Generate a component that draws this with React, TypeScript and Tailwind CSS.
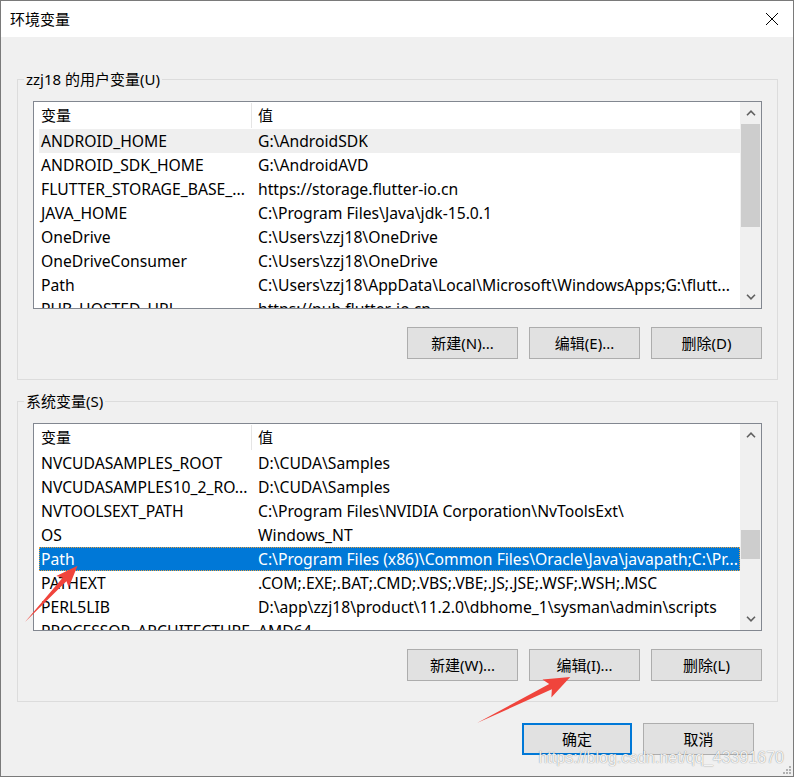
import React from "react";

type Row = [string, string];

const userRows: Row[] = [
  ["ANDROID_HOME", "G:\\AndroidSDK"],
  ["ANDROID_SDK_HOME", "G:\\AndroidAVD"],
  ["FLUTTER_STORAGE_BASE_...", "https://storage.flutter-io.cn"],
  ["JAVA_HOME", "C:\\Program Files\\Java\\jdk-15.0.1"],
  ["OneDrive", "C:\\Users\\zzj18\\OneDrive"],
  ["OneDriveConsumer", "C:\\Users\\zzj18\\OneDrive"],
  ["Path", "C:\\Users\\zzj18\\AppData\\Local\\Microsoft\\WindowsApps;G:\\flutt..."],
  ["PUB_HOSTED_URL", "https://pub.flutter-io.cn"],
];

const sysRows: Row[] = [
  ["NVCUDASAMPLES_ROOT", "D:\\CUDA\\Samples"],
  ["NVCUDASAMPLES10_2_RO...", "D:\\CUDA\\Samples"],
  ["NVTOOLSEXT_PATH", "C:\\Program Files\\NVIDIA Corporation\\NvToolsExt\\"],
  ["OS", "Windows_NT"],
  ["Path", "C:\\Program Files (x86)\\Common Files\\Oracle\\Java\\javapath;C:\\Pr..."],
  ["PATHEXT", ".COM;.EXE;.BAT;.CMD;.VBS;.VBE;.JS;.JSE;.WSF;.WSH;.MSC"],
  ["PERL5LIB", "D:\\app\\zzj18\\product\\11.2.0\\dbhome_1\\sysman\\admin\\scripts"],
  ["PROCESSOR_ARCHITECTURE", "AMD64"],
];

function Chevron({ up }: { up?: boolean }) {
  return (
    <svg width="10" height="6" viewBox="0 0 10 6" className="block">
      <polyline
        points={up ? "1,5.2 5,1.2 9,5.2" : "1,0.8 5,4.8 9,0.8"}
        fill="none"
        stroke="#606060"
        strokeWidth="1.6"
      />
    </svg>
  );
}

function VarList({
  rows,
  hoverIndex,
  selectedIndex,
  thumbOffset,
  thumbHeight,
}: {
  rows: Row[];
  hoverIndex?: number;
  selectedIndex?: number;
  thumbOffset: number;
  thumbHeight: number;
}) {
  return (
    <div className="h-[208px] w-[729px] border border-[#828790] bg-white flex">
      <div className="flex-1 pl-[5px] overflow-hidden flex flex-col">
        <div className="h-[27px] shrink-0 flex items-center">
          <div className="w-[212px] pl-[2px]">变量</div>
          <div className="w-px h-[25px] bg-[#e5e5e5]" />
          <div className="pl-[6px]">值</div>
        </div>
        {rows.map(([k, v], i) => {
          const sel = i === selectedIndex;
          const hov = i === hoverIndex;
          return (
            <div
              key={k + i}
              className={
                "h-[24px] shrink-0 flex items-center pt-px whitespace-nowrap text-[15.7px] " +
                (sel
                  ? "bg-[#0078d7] text-white outline outline-1 outline-dotted outline-[#e8a040] -outline-offset-1"
                  : hov
                  ? "bg-[#efefef]"
                  : "")
              }
            >
              <div className="w-[213px] shrink-0 pl-[2px] overflow-hidden">{k}</div>
              <div className="pl-[6px] overflow-hidden">{v}</div>
            </div>
          );
        })}
      </div>
      <div className="w-[21px] shrink-0 bg-[#f0f0f0] flex flex-col">
        <div className="h-[22px] shrink-0 flex items-center justify-center">
          <Chevron up />
        </div>
        <div className="shrink-0" style={{ height: thumbOffset }} />
        <div className="shrink-0 mx-px bg-[#cdcdcd]" style={{ height: thumbHeight }} />
        <div className="flex-1" />
        <div className="h-[22px] shrink-0 flex items-center justify-center">
          <Chevron />
        </div>
      </div>
    </div>
  );
}

function Btn({ children, primary }: { children: React.ReactNode; primary?: boolean }) {
  return (
    <div
      className={
        "h-[32px] flex items-center justify-center bg-[#e1e1e1] " +
        (primary ? "w-[110px] border-2 border-[#0078d7]" : "w-[111px] border border-[#adadad]")
      }
    >
      {children}
    </div>
  );
}

function Group({
  title,
  children,
  className,
}: {
  title: string;
  children: React.ReactNode;
  className?: string;
}) {
  return (
    <fieldset className={"border border-[#dcdcdc] " + (className || "")}>
      <legend className="ml-[6px] px-[2px] leading-[20px]">{title}</legend>
      <div className="px-[15px] pt-[12px] pb-[20px]">{children}</div>
    </fieldset>
  );
}

export default function App() {
  return (
    <div className="relative w-[794px] h-[777px] border border-[#7a7a7a] bg-[#f0f0f0] text-[15px] text-black font-['Noto_Sans','Noto_Sans_CJK_SC',sans-serif] flex flex-col overflow-hidden">
      {/* Title bar */}
      <div className="h-[36px] shrink-0 bg-white flex items-center justify-between pl-[9px] pr-[14px]">
        <span className="font-['Noto_Sans_CJK_SC',sans-serif]">环境变量</span>
        <svg width="14" height="14" viewBox="0 0 14 14">
          <path d="M1 1 L13 13 M13 1 L1 13" stroke="#000" strokeWidth="1" />
        </svg>
      </div>

      <div className="pl-[16px] pr-[15px] flex flex-col">
        <Group title="zzj18 的用户变量(U)" className="mt-[32px]">
          <VarList rows={userRows} hoverIndex={0} thumbOffset={0} thumbHeight={103} />
          <div className="mt-[18px] flex justify-end gap-[11px]">
            <Btn>新建(N)...</Btn>
            <Btn>编辑(E)...</Btn>
            <Btn>删除(D)</Btn>
          </div>
        </Group>

        <Group title="系统变量(S)" className="mt-[11px]">
          <VarList rows={sysRows} selectedIndex={4} thumbOffset={84} thumbHeight={29} />
          <div className="mt-[18px] flex justify-end gap-[11px]">
            <Btn>新建(W)...</Btn>
            <Btn>编辑(I)...</Btn>
            <Btn>删除(L)</Btn>
          </div>
        </Group>

        <div className="mt-[21px] pr-[24px] flex justify-end gap-[11px]">
          <Btn primary>确定</Btn>
          <Btn>取消</Btn>
        </div>
      </div>

      {/* Watermark */}
      <div className="absolute right-[9px] bottom-[8px] text-[16px] leading-[20px] text-white/90 font-['Liberation_Sans',sans-serif] [text-shadow:0_0_1px_rgba(0,0,0,0.55)]">
        https://blog.csdn.net/qq_43391670
      </div>

      {/* Resize grip */}
      <svg className="absolute right-[1px] bottom-[1px]" width="10" height="10" viewBox="0 0 10 10">
        <rect x="7" y="1" width="2" height="2" fill="#b0b0b0" />
        <rect x="4" y="4" width="2" height="2" fill="#b0b0b0" />
        <rect x="7" y="4" width="2" height="2" fill="#b0b0b0" />
        <rect x="1" y="7" width="2" height="2" fill="#b0b0b0" />
        <rect x="4" y="7" width="2" height="2" fill="#b0b0b0" />
        <rect x="7" y="7" width="2" height="2" fill="#b0b0b0" />
      </svg>

      {/* Red annotation arrows */}
      <svg className="absolute left-[-1px] top-[-1px] pointer-events-none" width="794" height="777" viewBox="0 0 794 777">
        <g transform="translate(25 622) rotate(-47)">
          <polygon points="0,0 58,-2.6 55,-8.5 77,0 55,8.5 58,2.6" fill="#f0443c" />
        </g>
        <g transform="translate(477 723) rotate(-26.3)">
          <polygon points="0,0 82,-3 78,-10 104,0 78,10 82,3" fill="#f0443c" />
        </g>
      </svg>
    </div>
  );
}
